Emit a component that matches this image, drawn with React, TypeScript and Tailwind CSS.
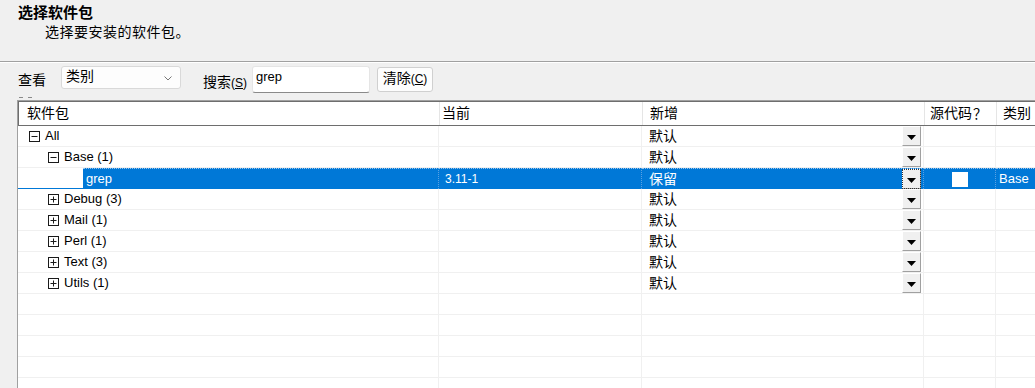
import React from "react";

const FONT = '"Liberation Sans","Noto Sans CJK SC",sans-serif';

function TreeBox({ plus }: { plus: boolean }) {
  return (
    <svg width="11" height="11" viewBox="0 0 11 11" className="shrink-0">
      <rect x="0.5" y="0.5" width="10" height="10" fill="white" stroke="#1a1a1a" />
      <line x1="2.5" y1="5.5" x2="8.5" y2="5.5" stroke="#1a1a1a" />
      {plus && <line x1="5.5" y1="2.5" x2="5.5" y2="8.5" stroke="#1a1a1a" />}
    </svg>
  );
}

function DropBtn({ focused }: { focused?: boolean }) {
  return (
    <div
      className={
        "w-[19px] h-[20px] mr-[2px] flex items-center justify-center bg-[#f0f0f0] border-t border-l border-t-white border-l-white border-b border-r border-b-[#a0a0a0] border-r-[#a0a0a0] " +
        (focused ? "outline outline-1 outline-dotted outline-[#333] -outline-offset-1" : "")
      }
    >
      <svg width="9" height="5" viewBox="0 0 9 5" className="mt-[3px]">
        <polygon points="0,0 9,0 4.5,5" fill="#000" />
      </svg>
    </div>
  );
}

type Row = {
  level: number;
  label?: string;
  box?: "plus" | "minus";
  cur?: string;
  neu?: string;
  selected?: boolean;
  cat?: string;
};

const rows: Row[] = [
  { level: 0, label: "All", box: "minus", neu: "默认" },
  { level: 1, label: "Base (1)", box: "minus", neu: "默认" },
  { level: 2, label: "grep", cur: "3.11-1", neu: "保留", selected: true, cat: "Base" },
  { level: 1, label: "Debug (3)", box: "plus", neu: "默认" },
  { level: 1, label: "Mail (1)", box: "plus", neu: "默认" },
  { level: 1, label: "Perl (1)", box: "plus", neu: "默认" },
  { level: 1, label: "Text (3)", box: "plus", neu: "默认" },
  { level: 1, label: "Utils (1)", box: "plus", neu: "默认" },
  { level: -1 },
  { level: -1 },
  { level: -1 },
  { level: -1 },
  { level: -1 },
];

const GRID = "grid grid-cols-[421px_203px_282px_72px_120px]";
const SELTOP = " border-t border-dotted border-t-[#9cc6ec]";

export default function App() {
  return (
    <div
      className="w-[1035px] h-[388px] bg-[#f0f0f0] overflow-hidden text-black"
      style={{ fontFamily: FONT }}
    >
      {/* heading */}
      <div className="pl-[18px] pt-[3px] h-[61px]">
        <div className="text-[15px] font-bold leading-[20px]">选择软件包</div>
        <div className="pl-[27px] text-[14px] leading-[18px] tracking-[0.5px]">选择要安装的软件包。</div>
      </div>
      <div className="h-[2px] border-t border-[#a0a0a0] border-b border-b-white" />

      {/* toolbar */}
      <div className="flex items-start h-[37px] pl-[18px] pt-[3px]">
        <div className="relative w-[43px] h-[30px]">
          <div className="text-[14px] leading-[20px] pt-[4px]">查看</div>
          <div className="absolute left-[1px] top-[31px] flex gap-[5px]">
            <div className="w-[4px] h-[1px] bg-[#8a8a8a]" />
            <div className="w-[4px] h-[1px] bg-[#8a8a8a]" />
          </div>
        </div>
        <div className="w-[120px] h-[23px] bg-[#fdfdfd] border border-[#d9d9d9] rounded-[3px] flex items-center justify-between pl-[4px] pr-[8px]">
          <span className="text-[14px] leading-[18px] -mt-[3px]">类别</span>
          <svg width="8" height="5" viewBox="0 0 8 5" className="mt-[1px]">
            <polyline points="0.5,0.5 4,4 7.5,0.5" fill="none" stroke="#777" />
          </svg>
        </div>
        <div className="ml-[22px] pt-[6px] text-[14px] leading-[20px] flex items-baseline">
          <span>搜索</span>
          <span className="text-[12px]">
            (<span className="underline">S</span>)
          </span>
        </div>
        <div className="ml-[5px] w-[118px] h-[27px] bg-white border border-[#e5e5e5] border-b-[#8a8a8a] rounded-[3px] pl-[3px] text-[13px] leading-[16px] pt-[2px]">
          grep
        </div>
        <div className="ml-[7px] mt-[1px] w-[56px] h-[25px] bg-[#fdfdfd] border border-[#d0d0d0] rounded-[3px] flex items-center justify-center text-[14px]">
          <span className="flex items-baseline -mt-[2px]">
            <span>清除</span>
            <span className="text-[12px]">
              (<span className="underline">C</span>)
            </span>
          </span>
        </div>
      </div>

      {/* table */}
      <div className="ml-[17px] h-[289px] bg-white border-l border-t border-[#a0a0a0] overflow-hidden">
        {/* header */}
        <div className={GRID + " h-[25px] border-t border-l border-b border-[#6e6e6e] bg-white text-[14px]"}>
          <div className="pl-[8px] leading-[22px] border-r border-[#e5e5e5]">软件包</div>
          <div className="pl-[2px] leading-[22px] border-r border-[#e5e5e5]">当前</div>
          <div className="pl-[7px] leading-[22px] border-r border-[#e5e5e5]">新增</div>
          <div className="pl-[5px] leading-[22px] border-r border-[#e5e5e5] flex">
            <span>源代码</span>
            <span className="ml-[1px]" style={{ fontFamily: '"Noto Sans CJK SC",sans-serif' }}>？</span>
          </div>
          <div className="pl-[6px] leading-[22px]">类别</div>
        </div>
        {/* body */}
        {rows.map((r, i) => {
          const sel = !!r.selected;
          const empty = r.level < 0;
          const divider = sel ? "border-r border-[#5aa1e3]" : "border-r border-[#f0f0f0]";
          return (
            <div
              key={i}
              className={
                GRID +
                " h-[21px] border-b " +
                (sel ? "border-b-[#0078d7]" : "border-[#f0f0f0]") +
                " text-[13px]"
              }
            >
              <div className={"flex items-center h-full " + (sel ? "" : divider)}>
                {!empty && r.level === 0 && (
                  <div className="flex items-center gap-[5px] pl-[11px]">
                    <TreeBox plus={r.box === "plus"} />
                    <span className="leading-[14px]">{r.label}</span>
                  </div>
                )}
                {!empty && r.level === 1 && (
                  <div className="flex items-center gap-[5px] pl-[30px]">
                    <TreeBox plus={r.box === "plus"} />
                    <span className="leading-[14px]">{r.label}</span>
                  </div>
                )}
                {!empty && r.level === 2 && (
                  <div
                    className={
                      "ml-[65px] flex-1 h-full bg-[#0078d7] text-white flex items-center pl-[3px] border-r border-r-[#5aa1e3]" +
                      SELTOP
                    }
                  >
                    {r.label}
                  </div>
                )}
              </div>
              <div
                className={
                  "flex items-center h-full pl-[6px] text-[12px] " +
                  divider +
                  (sel ? " bg-[#0078d7] text-white" + SELTOP : "")
                }
              >
                {r.cur}
              </div>
              <div
                className={
                  "flex items-center justify-between h-full pl-[7px] text-[14px] " +
                  divider +
                  (sel ? " bg-[#0078d7] text-white" + SELTOP : "")
                }
              >
                <span className="leading-[18px]">{r.neu}</span>
                {!empty && <DropBtn focused={sel} />}
              </div>
              <div
                className={
                  "flex items-center justify-center h-full " + divider + (sel ? " bg-[#0078d7]" + SELTOP : "")
                }
              >
                {sel && <div className="w-[16px] h-[15px] bg-white" />}
              </div>
              <div
                className={
                  "flex items-center h-full pl-[3px] text-[13px] " +
                  (sel ? "bg-[#0078d7] text-white" + SELTOP : "")
                }
              >
                {r.cat}
              </div>
            </div>
          );
        })}
      </div>
    </div>
  );
}
